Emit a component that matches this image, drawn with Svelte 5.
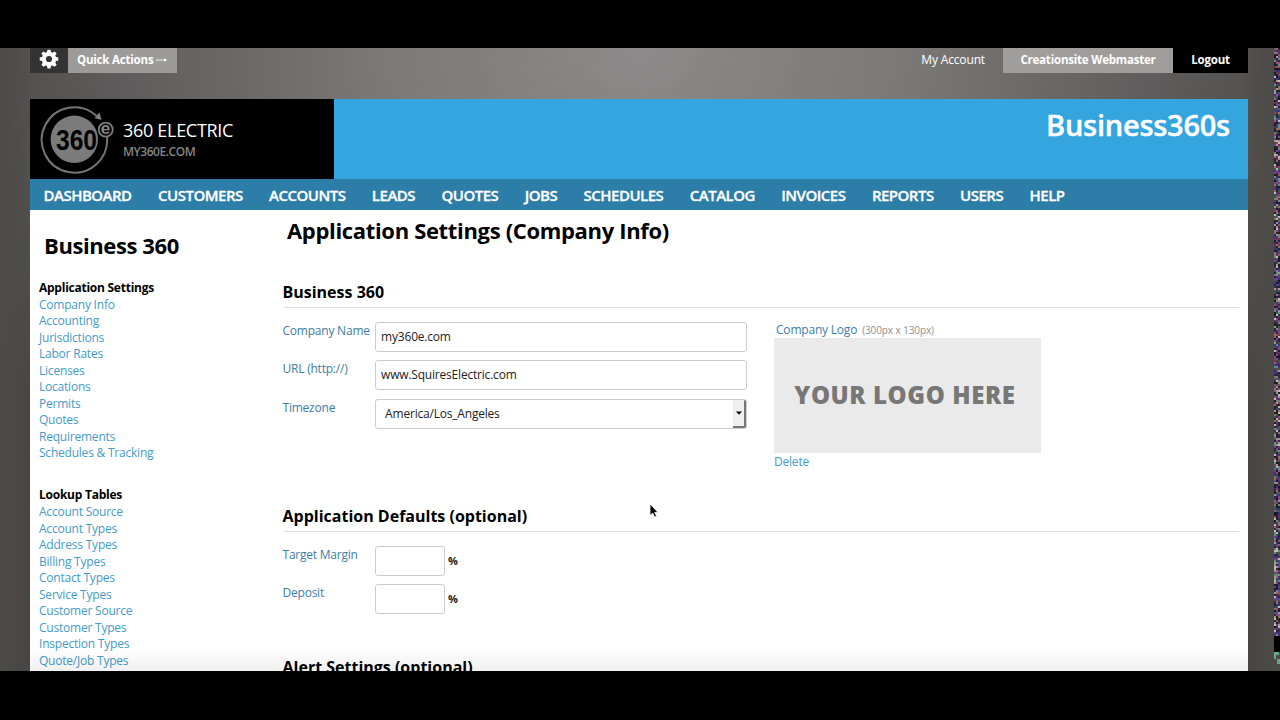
<script lang="ts">
	interface LinkGroup {
		title: string;
		links: string[];
	}

	const nav = [
		'Dashboard', 'Customers', 'Accounts', 'Leads', 'Quotes', 'Jobs',
		'Schedules', 'Catalog', 'Invoices', 'Reports', 'Users', 'Help'
	];

	const groups: LinkGroup[] = [
		{
			title: 'Application Settings',
			links: [
				'Company Info', 'Accounting', 'Jurisdictions', 'Labor Rates', 'Licenses',
				'Locations', 'Permits', 'Quotes', 'Requirements', 'Schedules & Tracking'
			]
		},
		{
			title: 'Lookup Tables',
			links: [
				'Account Source', 'Account Types', 'Address Types', 'Billing Types', 'Contact Types',
				'Service Types', 'Customer Source', 'Customer Types', 'Inspection Types', 'Quote/Job Types'
			]
		}
	];

	let companyName = $state('my360e.com');
	let url = $state('www.SquiresElectric.com');
	let margin = $state('');
	let deposit = $state('');

	// coloured static along the right edge of the recording
	const palette = [
		'#31203e', '#7b4a7b', '#28242c', '#9d9791', '#47307a', '#3b5a4c', '#1b191f', '#8d5670',
		'#5b4b88', '#c0b9ac', '#332c54', '#648f80', '#6d3455', '#202028', '#95705a', '#3b337f'
	];
	let seed = 360;
	function rand() {
		seed = (seed * 1103515245 + 12345) % 2147483648;
		return seed / 2147483648;
	}
	const specks: { x: number; y: number; w: number; color: string }[] = [];
	for (let y = 0; y < 588; y += 2) {
		for (let x = 0; x < 6; x += 2) {
			specks.push({ x, y, w: rand() > 0.6 ? 4 : 2, color: palette[Math.floor(rand() * 16)] });
		}
	}
</script>

<div class="screen">
	<div class="page">
		<div class="topbar">
			<button class="gear" aria-label="Settings">
				<svg width="20" height="20" viewBox="0 0 20 20">
					<path fill="#fff" fill-rule="evenodd" d="M8.5 .8h3l.5 2.3 1.6.7 2-1.3 2 2-1.3 2 .7 1.6 2.3.5v3l-2.3.5-.7 1.6 1.3 2-2 2-2-1.3-1.6.7-.5 2.3h-3l-.5-2.3-1.6-.7-2 1.3-2-2 1.3-2-.7-1.6-2.3-.5v-3l2.3-.5.7-1.6-1.3-2 2-2 2 1.3 1.6-.7zM10 6.9a3.1 3.1 0 1 0 0 6.2 3.1 3.1 0 0 0 0-6.2z" />
				</svg>
			</button>
			<button class="quick">
				Quick Actions
				<svg width="12" height="6" viewBox="0 0 12 6">
					<path d="M0 3h9" stroke="#fff" stroke-width=".8" />
					<path d="M8 1.2 11.2 3 8 4.8z" fill="#fff" />
				</svg>
			</button>
			<span class="account">My Account</span>
			<span class="user">Creationsite Webmaster</span>
			<span class="logout">Logout</span>
		</div>

		<header>
			<div class="brand">
				<svg class="logo" width="76" height="72" viewBox="0 0 76 72">
					<path d="M57.5 12.8A32.7 32.7 0 1 0 68 34" fill="none" stroke="#747474" stroke-width="2" />
					<path d="M55.5 15 60.5 9.5 62.5 17z" fill="#858585" />
					<circle cx="35.3" cy="36.3" r="23.7" fill="#7b7b7b" />
					<text x="17" y="47" textLength="41" lengthAdjust="spacingAndGlyphs">360</text>
					<circle cx="66.7" cy="26.7" r="7" fill="#000" stroke="#7b7b7b" stroke-width="1.8" />
					<text class="e" x="61.7" y="31.4">e</text>
				</svg>
				<div class="brand-text">
					<div class="brand-name">360 ELECTRIC</div>
					<div class="brand-url">MY360E.COM</div>
				</div>
			</div>
			<div class="title">Business360s</div>
		</header>

		<nav>
			{#each nav as item}
				<span>{item.toUpperCase()}</span>
			{/each}
		</nav>

		<div class="body">
			<aside>
				<h2>Business 360</h2>
				{#each groups as group}
					<div class="group">
						<h4>{group.title}</h4>
						{#each group.links as link}
							<div class="link">{link}</div>
						{/each}
					</div>
				{/each}
			</aside>

			<main>
				<h1>Application Settings (Company Info)</h1>

				<section class="company">
					<h3>Business 360</h3>
					<div class="columns">
						<div class="fields">
							<div class="row">
								<label for="name">Company Name</label>
								<input id="name" bind:value={companyName} />
							</div>
							<div class="row">
								<label for="url">URL (http://)</label>
								<input id="url" bind:value={url} />
							</div>
							<div class="row">
								<span class="label">Timezone</span>
								<div class="select">
									<span>America/Los_Angeles</span>
									<i><svg width="6" height="4" viewBox="0 0 6 4"><path d="M0 .5h6L3 3.7z" /></svg></i>
								</div>
							</div>
						</div>
						<div class="upload">
							<div class="upload-label">Company Logo <small>(300px x 130px)</small></div>
							<div class="placeholder"><span>YOUR LOGO HERE</span></div>
							<div class="delete">Delete</div>
						</div>
					</div>
				</section>

				<section class="defaults">
					<h3>Application Defaults (optional)</h3>
					<div class="fields">
						<div class="row">
							<label for="margin">Target Margin</label>
							<input id="margin" class="short" bind:value={margin} />
							<b>%</b>
						</div>
						<div class="row">
							<label for="deposit">Deposit</label>
							<input id="deposit" class="short" bind:value={deposit} />
							<b>%</b>
						</div>
					</div>
				</section>

				<section>
					<h3>Alert Settings (optional)</h3>
				</section>
			</main>
		</div>
	</div>

	<div class="fade"></div>
	<svg class="static" width="6" height="623" viewBox="0 0 6 623">
		{#each specks as s}
			<rect x={s.x} y={s.y} width={s.w} height="2" fill={s.color} />
		{/each}
		<rect y="588" width="6" height="16" fill="#000" />
		<path d="M0 604h5v3H2v4H0zM3 611h3v5H3z" fill="#67a58c" />
	</svg>
	<svg class="cursor" width="10" height="16" viewBox="0 0 10 16">
		<path d="M1 1v11.5l2.7-2.4 1.9 4 2-.9-1.9-3.8H9z" fill="#000" stroke="#fff" stroke-width=".8" />
	</svg>
</div>

<style>
	:global(body) {
		background: #000;
		overflow: hidden;
	}

	.screen {
		position: relative;
		box-sizing: border-box;
		width: 1280px;
		height: 623px;
		margin: 48px 0 49px;
		padding: 0 32px 0 30px;
		overflow: hidden;
		background:
			linear-gradient(90deg, #4d4b48 0, transparent 36px, transparent 1240px, #4c4a47 1275px),
			radial-gradient(ellipse 750px 620px at 640px 0, #8c8a8a 0, #7b7977 35%, #5d5b5b 70%, #474340 100%);
		font-family: 'Open Sans', sans-serif;
		color: #000;
	}

	.topbar {
		display: flex;
		align-items: stretch;
		height: 25px;
		margin-bottom: 26px;
		font-size: 12px;
		line-height: 24px;
		color: #fff;
	}

	button {
		border: 0;
		padding: 0;
		font: inherit;
		color: inherit;
	}

	.gear {
		display: flex;
		align-items: center;
		justify-content: center;
		width: 38px;
		padding-bottom: 3px;
		background: #333;
	}

	.quick {
		display: flex;
		align-items: center;
		gap: 3px;
		width: 109px;
		padding: 0 0 1px 9px;
		background: #9d9b99;
		font-size: 11.5px;
		font-weight: 700;
		letter-spacing: -0.2px;
		white-space: nowrap;
	}

	.account {
		margin-left: auto;
		padding-right: 18px;
		letter-spacing: -0.15px;
	}

	.user,
	.logout {
		text-align: center;
		font-size: 11.5px;
		font-weight: 700;
		letter-spacing: -0.2px;
	}

	.user {
		width: 170px;
		background: #a09e9c;
	}

	.logout {
		width: 75px;
		background: #000;
	}

	header {
		display: flex;
		justify-content: space-between;
		height: 80px;
		background: #35a5df;
	}

	.brand {
		display: flex;
		width: 304px;
		background: #000;
	}

	.logo {
		margin: 4px 6px 0 9px;
		font-family: 'Liberation Sans', sans-serif;
		font-weight: 700;
		font-size: 30px;
	}

	.logo .e {
		font-size: 17px;
		fill: #858585;
	}

	.brand-text {
		padding: 19px 0 0 2px;
	}

	.brand-name {
		font-size: 18px;
		line-height: 24px;
		letter-spacing: -0.3px;
		color: #fff;
	}

	.brand-url {
		font-size: 12px;
		line-height: 19px;
		letter-spacing: -0.45px;
		font-weight: 600;
		color: #858585;
	}

	.title {
		padding: 5px 18px 0 0;
		font-size: 29px;
		font-weight: 600;
		line-height: 42px;
		letter-spacing: -0.25px;
		-webkit-text-stroke: 0.4px #fff;
		color: #fff;
	}

	nav {
		display: flex;
		gap: 26.4px;
		height: 31px;
		padding-left: 13.5px;
		background: #2c7da8;
		font-size: 15px;
		font-weight: 600;
		line-height: 33px;
		letter-spacing: -0.5px;
		-webkit-text-stroke: 0.3px #fff;
		color: #fff;
	}

	.body {
		display: flex;
		height: 480px;
		background: #fff;
	}

	aside {
		width: 243.5px;
		padding-left: 9px;
	}

	h1,
	h2,
	h3,
	h4 {
		margin: 0;
		font-weight: 700;
	}

	h2 {
		padding: 20px 0 0 5px;
		margin-bottom: 19px;
		font-size: 22px;
		line-height: 30px;
		letter-spacing: -0.4px;
	}

	h4 {
		font-size: 12px;
		line-height: 17.5px;
		letter-spacing: -0.25px;
	}

	.group {
		margin-bottom: 24.5px;
		font-size: 12px;
		line-height: 16.55px;
		letter-spacing: -0.22px;
		color: #439bcb;
	}

	.group h4 {
		color: #000;
	}

	main {
		width: 956.5px;
	}

	h1 {
		padding: 5px 0 0 4.5px;
		font-size: 22px;
		line-height: 30px;
		letter-spacing: -0.33px;
		margin-bottom: 32px;
	}

	h3 {
		height: 30px;
		border-bottom: 1px solid #ddd;
		font-size: 16px;
		line-height: 30px;
		letter-spacing: 0;
	}

	.company {
		height: 224px;
	}

	.defaults {
		height: 151px;
	}

	.columns {
		display: flex;
	}

	.fields {
		width: 491.5px;
		padding-top: 13.5px;
	}

	.row {
		display: flex;
		height: 38.8px;
		font-size: 12px;
	}

	.row label,
	.row .label {
		width: 92.6px;
		padding-top: 1px;
		line-height: 16px;
		letter-spacing: -0.22px;
		color: #3c7da9;
	}

	input,
	.select {
		box-sizing: border-box;
		width: 372px;
		height: 30px;
		border: 1px solid #ccc;
		border-radius: 3px;
		background: #fff;
		font-family: inherit;
		font-size: 12px;
		letter-spacing: -0.2px;
		color: #222;
	}

	input {
		padding: 0 5px 1px;
	}

	.short {
		width: 70px;
	}

	.row b {
		padding-left: 3px;
		font-size: 11px;
		line-height: 30px;
		color: #222;
	}

	.select {
		display: flex;
		justify-content: space-between;
		padding-left: 9px;
		line-height: 28px;
	}

	.select i {
		display: flex;
		align-items: center;
		justify-content: center;
		width: 11px;
		border-right: 2px solid #777;
		border-bottom: 2px solid #777;
		border-radius: 0 2px 2px 0;
		background: #efefef;
	}

	.upload {
		padding-top: 13px;
		font-size: 12px;
		letter-spacing: -0.2px;
	}

	.upload-label {
		height: 17px;
		padding-left: 2px;
		line-height: 18px;
		color: #3c7da9;
	}

	.upload-label small {
		margin-left: 2px;
		font-size: 10px;
		letter-spacing: -0.1px;
		color: #8f8f8f;
	}

	.placeholder {
		width: 267px;
		height: 115px;
		background: #eaeaea;
		text-align: center;
		font-size: 24px;
		font-weight: 800;
		line-height: 113px;
		letter-spacing: 0.6px;
		color: #777;
	}

	.placeholder span {
		margin-right: 5px;
	}

	.delete {
		line-height: 17px;
		color: #439bcb;
	}

	.fade {
		position: absolute;
		left: 30px;
		bottom: 0;
		width: 1218px;
		height: 24px;
		background: linear-gradient(transparent, rgba(0, 0, 0, 0.06));
	}

	.static {
		position: absolute;
		top: 0;
		right: 0;
	}

	.cursor {
		position: absolute;
		left: 649px;
		top: 455px;
	}
</style>
